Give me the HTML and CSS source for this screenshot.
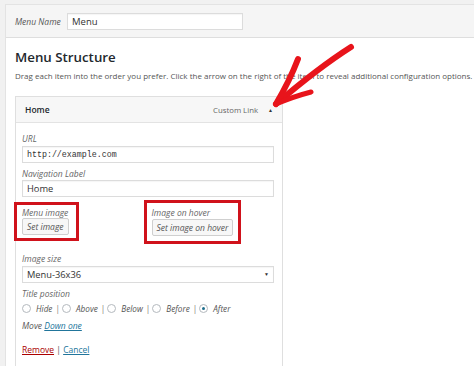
FILE: index.html
```html
<!DOCTYPE html>
<html lang="en">
<head>
  <meta charset="UTF-8" />
  <title>Menus</title>
  <link rel="stylesheet" href="styles.css">
</head>
<body>
  <div class="wrap">
    <div class="frame">
      <div class="menu-head">
        <label class="italic-label">Menu Name</label>
        <div class="field name-field">Menu</div>
      </div>

      <div class="menu-body">
        <h2>Menu Structure</h2>
        <p class="hint">Drag each item into the order you prefer. Click the arrow on the right of the item to reveal additional configuration options.</p>

        <div class="item">
          <div class="item-bar">
            <span class="item-title">Home</span>
            <span class="item-type">Custom Link</span>
            <span class="toggle">&#9650;</span>
          </div>

          <div class="item-settings">
            <div class="label">URL</div>
            <div class="field mono">http://example.com</div>

            <div class="label">Navigation Label</div>
            <div class="field">Home</div>

            <div class="image-row">
              <div class="img-opt first">
                <div class="label">Menu image</div>
                <span class="btn">Set image</span>
              </div>
              <div class="img-opt second">
                <div class="label">Image on hover</div>
                <span class="btn">Set image on hover</span>
              </div>
            </div>

            <div class="label">Image size</div>
            <div class="field select">Menu-36x36 <span class="caret">&#9660;</span></div>

            <div class="label">Title position</div>
            <div class="radios">
              <span class="radio"></span><span class="opt">Hide</span><span class="sep">|</span>
              <span class="radio"></span><span class="opt">Above</span><span class="sep">|</span>
              <span class="radio"></span><span class="opt">Below</span><span class="sep">|</span>
              <span class="radio"></span><span class="opt">Before</span><span class="sep">|</span>
              <span class="radio checked"></span><span class="opt">After</span>
            </div>

            <div class="move">Move <a href="#">Down one</a></div>

            <div class="actions"><a href="#" class="remove">Remove</a> | <a href="#">Cancel</a></div>
          </div>
        </div>
      </div>
    </div>
  </div>

  <!-- hand-drawn arrow pointing at the toggle -->
  <svg class="arrow" width="474" height="366" viewBox="0 0 474 366">
    <g fill="none" stroke="#e8141b" stroke-linecap="round">
      <path d="M351 47 Q318 68 276 104" stroke-width="6"/>
      <path d="M298 59 Q290 80 276 104" stroke-width="6"/>
      <path d="M276 104 Q292 97 311 92" stroke-width="5"/>
    </g>
  </svg>
</body>
</html>
```

FILE: styles.css
```css
body {
  margin: 0;
  font-family: 'Open Sans', sans-serif;
  color: #444;
  background: #f1f1f1;
  overflow: hidden;
  height: 366px;
}

.wrap {
  padding: 4px 0 0 5px;
  height: 366px;
  box-sizing: border-box;
}

.frame {
  background: #fff;
  border: 1px solid #e3e3e3;
  border-right: none;
  border-bottom: none;
  height: 100%;
  box-sizing: border-box;
  overflow: hidden;
}

.menu-head {
  display: flex;
  align-items: center;
  height: 32px;
  padding: 0 9px;
  background: #f5f5f5;
  border-bottom: 1px solid #dedede;
}

.italic-label {
  font-style: italic;
  font-size: 8.5px;
  color: #555;
  width: 52px;
}

.field {
  box-sizing: border-box;
  height: 17px;
  border: 1px solid #dcdcdc;
  background: #fff;
  font-size: 9.3px;
  color: #333;
  padding: 0 4px;
  line-height: 15px;
  box-shadow: inset 0 1px 1px rgba(0,0,0,0.04);
}

.name-field {
  width: 176px;
  font-size: 9.5px;
}

.menu-body {
  padding: 0 9px;
}

h2 {
  margin: 11px 0 0;
  font-size: 13.3px;
  line-height: 16px;
  font-weight: 600;
  color: #23282d;
}

.hint {
  margin: 5px 0 15px;
  font-size: 8px;
  line-height: 11px;
  color: #555;
  white-space: nowrap;
}

.item {
  width: 268px;
  box-sizing: border-box;
  border: 1px solid #dfdfdf;
  border-bottom: none;
  height: 280px;
}

.item-bar {
  display: flex;
  align-items: center;
  height: 25px;
  padding: 0 9px;
  background: #f7f7f7;
  border-bottom: 1px solid #e3e3e3;
}

.item-title {
  font-size: 8.5px;
  font-weight: 600;
  color: #23282d;
  flex: 1;
}

.item-type {
  font-size: 7.8px;
  color: #666;
}

.toggle {
  font-size: 5px;
  color: #333;
  margin-left: 10px;
}

.item-settings {
  padding: 10px 6px 0;
}

.label {
  font-style: italic;
  font-size: 8.5px;
  line-height: 11px;
  color: #666;
  margin-bottom: 2px;
}

.item-settings > .field {
  width: 252px;
  margin-bottom: 5px;
}

.item-settings > .field + .label {
  margin-bottom: 1px;
}

.mono {
  font-family: 'Liberation Mono', monospace;
  font-size: 8.3px;
}

.image-row {
  display: flex;
  align-items: flex-start;
  gap: 65px;
  margin: 3px 0 9px -8px;
}

.img-opt {
  border: 3px solid #d0121b;
  padding: 2px 7px 3px 5px;
}

.img-opt .label {
  margin-bottom: 0;
}

.second {
  margin-top: -2px;
  padding: 4px 5px 5px;
}

.second .label {
  margin-bottom: 1px;
}

.btn {
  display: block;
  width: max-content;
  font-style: italic;
  font-size: 8.5px;
  line-height: 15px;
  color: #555;
  border: 1px solid #cfcfcf;
  background: #f7f7f7;
  border-radius: 2px;
  padding: 0 4px;
}

.select {
  display: flex;
  justify-content: space-between;
  margin-bottom: 8px;
}

.caret {
  font-size: 5px;
  color: #333;
}

.radios {
  display: flex;
  align-items: center;
  height: 10px;
  font-style: italic;
  font-size: 8.2px;
  color: #555;
  margin-top: 4px;
}

.radio {
  box-sizing: border-box;
  width: 9px;
  height: 9px;
  border: 1px solid #b4b9be;
  border-radius: 50%;
  margin: 0 5px 0 0;
  position: relative;
  background: #fff;
}

.radio.checked::after {
  content: "";
  position: absolute;
  left: 2px;
  top: 2px;
  width: 3px;
  height: 3px;
  border-radius: 50%;
  background: #1e6e8c;
}

.sep {
  font-style: normal;
  margin: 0 2px 0 3px;
  color: #777;
}

.move {
  font-style: italic;
  font-size: 8.5px;
  line-height: 11px;
  color: #555;
  margin-top: 7px;
}

.move a,
.actions a {
  color: #21759b;
}

.actions {
  font-size: 8.5px;
  line-height: 11px;
  color: #555;
  margin-top: 13px;
}

.actions .remove {
  color: #a00;
}

.arrow {
  position: absolute;
  left: 0;
  top: 0;
  pointer-events: none;
}
```
